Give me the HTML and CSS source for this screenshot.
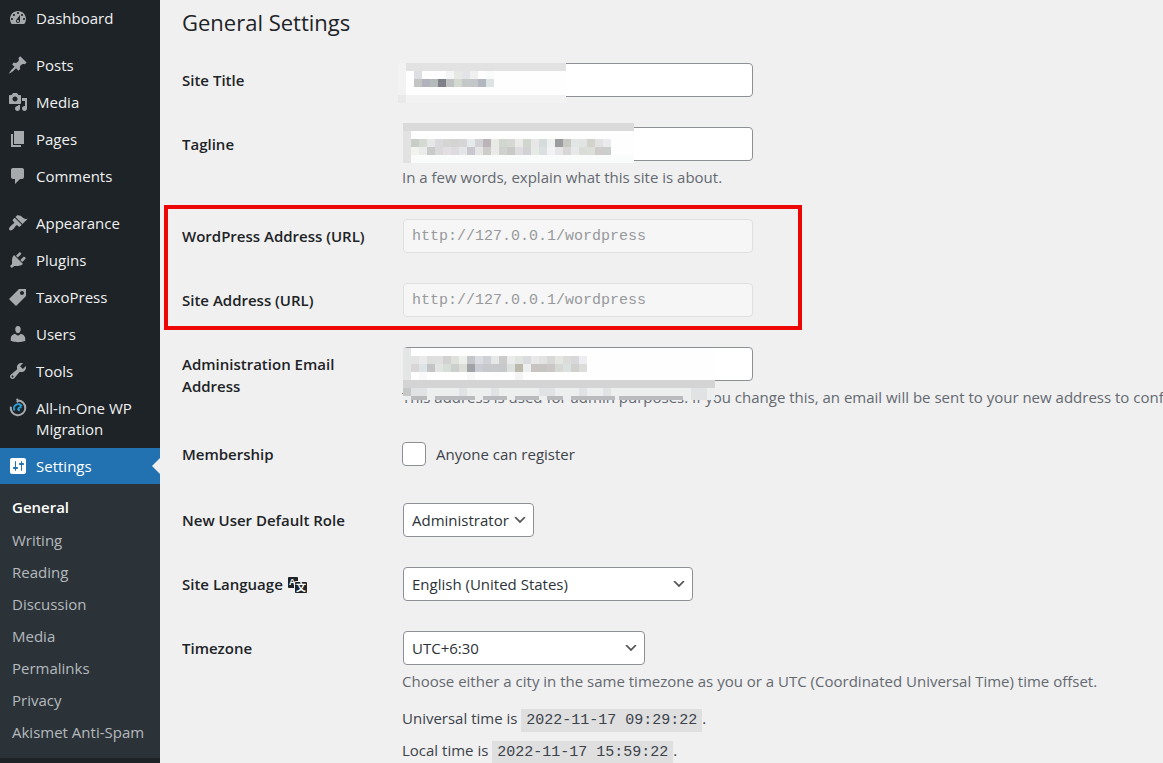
FILE: index.html
```
<!DOCTYPE html>
<html lang="en">
<head>
  <meta charset="UTF-8" />
  <meta name="viewport" content="width=device-width, initial-scale=1.0"/>
  <title>General Settings</title>
  <link rel="stylesheet" href="styles.css">
</head>
<body>
  <div class="admin">
    <nav class="sidebar">
      <ul class="menu">
        <li><a href="#"><svg class="icon" viewBox="0 0 20 20"><path fill-rule="evenodd" d="M3.76 16h12.48c1.1-1.37 1.76-3.11 1.76-5 0-4.42-3.58-8-8-8s-8 3.58-8 8c0 1.89.66 3.63 1.76 5zM10 4c.55 0 1 .45 1 1s-.45 1-1 1-1-.45-1-1 .45-1 1-1zM6 6c.55 0 1 .45 1 1s-.45 1-1 1-1-.45-1-1 .45-1 1-1zm8 0c.55 0 1 .45 1 1s-.45 1-1 1-1-.45-1-1 .45-1 1-1zm-5.37 5.55L12 7v6c0 1.1-.9 2-2 2s-2-.9-2-2c0-.57.24-1.08.63-1.45zM4 10c.55 0 1 .45 1 1s-.45 1-1 1-1-.45-1-1 .45-1 1-1zm12 0c.55 0 1 .45 1 1s-.45 1-1 1-1-.45-1-1 .45-1 1-1zm-5 3c0-.55-.45-1-1-1s-1 .45-1 1 .45 1 1 1 1-.45 1-1z"/></svg>Dashboard</a></li>
        <li class="separator"></li>
        <li><a href="#"><svg class="icon" viewBox="0 0 20 20"><path d="M10.44 3.02l1.82-1.82 6.36 6.35-1.83 1.82c-1.05-.68-2.48-.57-3.41.36l-.75.75c-.92.93-1.04 2.35-.35 3.41l-1.83 1.82-2.41-2.41-2.8 2.79c-.42.42-3.38 2.71-3.8 2.29s1.86-3.39 2.28-3.81l2.79-2.79L4.1 9.36l1.83-1.82c1.05.69 2.48.57 3.4-.36l.75-.75c.93-.92 1.05-2.35.36-3.41z"/></svg>Posts</a></li>
        <li><a href="#"><svg class="icon" viewBox="0 0 20 20"><path fill-rule="evenodd" d="M13 11V4c0-.55-.45-1-1-1h-1.67L9 1H5L3.67 3H2c-.55 0-1 .45-1 1v7c0 .55.45 1 1 1h10c.55 0 1-.45 1-1zM7 4.5c1.38 0 2.5 1.12 2.5 2.5S8.38 9.5 7 9.5 4.5 8.38 4.5 7 5.62 4.5 7 4.5zM14 6h5v10.5c0 1.38-1.12 2.5-2.5 2.5S14 17.88 14 16.5s1.12-2.5 2.5-2.5c.17 0 .34.02.5.05V9h-3V6zm-4 8.05V13h2v3.5c0 1.38-1.12 2.5-2.5 2.5S7 17.88 7 16.5 8.12 14 9.5 14c.17 0 .34.02.5.05z"/></svg>Media</a></li>
        <li><a href="#"><svg class="icon" viewBox="0 0 20 20"><path d="M6 15V2h10v13H6zm-1 1h8v2H3V5h2v11z"/></svg>Pages</a></li>
        <li><a href="#"><svg class="icon" viewBox="0 0 20 20"><path d="M5 2h9c1.1 0 2 .9 2 2v7c0 1.1-.9 2-2 2h-2l-5 5v-5H5c-1.1 0-2-.9-2-2V4c0-1.1.9-2 2-2z"/></svg>Comments</a></li>
        <li class="separator"></li>
        <li><a href="#"><svg class="icon" viewBox="0 0 20 20"><path d="M14.48 11.06L7.41 3.99l1.5-1.5c.5-.56 2.3-.47 3.51.32 1.21.8 1.43 1.28 2.91 2.1 1.18.64 2.45 1.26 4.45.85zm-.71.71L6.7 4.7 4.93 6.47c-.39.39-.39 1.02 0 1.41l1.06 1.06c.39.39.39 1.03 0 1.42-.6.6-1.43 1.11-2.21 1.69-.35.26-.7.53-1.01.84C1.43 14.23.4 16.08 1.4 17.07c.99 1 2.84-.03 4.18-1.36.31-.31.58-.66.85-1.02.57-.78 1.08-1.61 1.69-2.21.39-.39 1.02-.39 1.41 0l1.06 1.06c.39.39 1.02.39 1.41 0z"/></svg>Appearance</a></li>
        <li><a href="#"><svg class="icon" viewBox="0 0 20 20"><path d="M13.11 4.36L9.87 7.6 8 5.73l3.24-3.24c.35-.34 1.05-.2 1.56.32.52.51.66 1.21.31 1.55zm-8 1.77l.91-1.12 9.01 9.01-1.19.84c-.71.71-2.63 1.16-3.82 1.16H6.14L4.9 17.26c-.59.59-1.54.59-2.12 0-.59-.58-.59-1.53 0-2.12l1.24-1.24v-3.88c0-1.13.4-3.19 1.09-3.89zm7.26 3.97l3.24-3.24c.34-.35 1.04-.21 1.55.31.52.51.66 1.21.31 1.55l-3.24 3.25z"/></svg>Plugins</a></li>
        <li><a href="#"><svg class="icon" viewBox="0 0 20 20"><path fill-rule="evenodd" d="M11 2h7v7L8 19l-7-7zm3 6c1.1 0 2-.9 2-2s-.9-2-2-2-2 .9-2 2 .9 2 2 2z"/></svg>TaxoPress</a></li>
        <li><a href="#"><svg class="icon" viewBox="0 0 20 20"><path d="M10 9.25c-2.27 0-2.73-3.44-2.73-3.44C7 4.02 7.82 2 9.97 2c2.16 0 2.98 2.02 2.71 3.81 0 0-.41 3.44-2.68 3.44zm0 2.57L12.72 10c2.39 0 4.52 2.33 4.52 4.53v2.49s-3.65 1.13-7.24 1.13c-3.65 0-7.24-1.13-7.24-1.13v-2.49c0-2.25 1.94-4.48 4.47-4.48z"/></svg>Users</a></li>
        <li><a href="#"><svg class="icon" viewBox="0 0 20 20"><path fill-rule="evenodd" d="M16.68 9.77c-1.34 1.34-3.3 1.67-4.95.99l-5.41 6.52c-.99.99-2.59.99-3.58 0s-.99-2.59 0-3.57l6.52-5.42c-.68-1.65-.35-3.61.99-4.95 1.28-1.28 3.12-1.62 4.72-1.06l-2.89 2.89 2.82 2.82 2.86-2.87c.53 1.58.18 3.39-1.08 4.65zM3.81 16.21c.4.39 1.04.39 1.43 0 .4-.4.4-1.04 0-1.43-.39-.4-1.03-.4-1.43 0-.39.39-.39 1.03 0 1.43z"/></svg>Tools</a></li>
        <li><a href="#"><svg class="icon migrate" viewBox="0 0 20 20"><path class="ring" d="M9.5 2.6A7.3 7.3 0 1 1 2.8 8.6M8.6 1l1.6 1.6-1.2 1.8"/><path class="swirl" d="M6.6 12.4A4 4 0 1 1 13.6 8.2M13.6 9.6c-1.8-.9-3.6.1-3.4 1.8l1.6 1.2"/></svg>All-in-One WP Migration</a></li>
        <li class="current"><a href="#"><svg class="icon" viewBox="0 0 20 20"><path fill-rule="evenodd" d="M18 16V4c0-1.1-.9-2-2-2H4c-1.1 0-2 .9-2 2v12c0 1.1.9 2 2 2h12c1.1 0 2-.9 2-2zM8 11h1c.55 0 1 .45 1 1s-.45 1-1 1H8v1.5c0 .28-.22.5-.5.5s-.5-.22-.5-.5V13H6c-.55 0-1-.45-1-1s.45-1 1-1h1V5.5c0-.28.22-.5.5-.5s.5.22.5.5V11zm5-2h-1c-.55 0-1-.45-1-1s.45-1 1-1h1V5.5c0-.28.22-.5.5-.5s.5.22.5.5V7h1c.55 0 1 .45 1 1s-.45 1-1 1h-1v5.5c0 .28-.22.5-.5.5s-.5-.22-.5-.5V9z"/></svg>Settings</a></li>
      </ul>
      <ul class="submenu">
        <li><a href="#" class="active">General</a></li>
        <li><a href="#">Writing</a></li>
        <li><a href="#">Reading</a></li>
        <li><a href="#">Discussion</a></li>
        <li><a href="#">Media</a></li>
        <li><a href="#">Permalinks</a></li>
        <li><a href="#">Privacy</a></li>
        <li><a href="#">Akismet Anti-Spam</a></li>
      </ul>
    </nav>

    <main class="content">
      <h1>General Settings</h1>
      <form>
        <div class="row">
          <label for="blogname">Site Title</label>
          <div class="field">
            <input type="text" id="blogname" class="text-input">
            <svg class="mosaic mosaic-title" width="168" height="40" aria-hidden="true">
              <path fill="#fefefe" d="M0 0h168v40H0z"/>
              <path fill="#e1e2e1" d="M8 0h160v8H8z"/>
              <path fill="#f2f2f2" d="M0 0h8v40H0zM8 32h160v8H8z"/>
              <path fill="#e9e9e9" d="M0 32h8v8H0z"/>
              <g>
                <rect x="16" y="8" fill="#dedfe3"/><rect x="48" y="8" fill="#f4f6f6"/><rect x="56" y="8" fill="#e6e8e4"/><rect x="64" y="8" fill="#e3e4e8"/><rect x="72" y="8" fill="#f0f0f0"/><rect x="88" y="8" fill="#f9fbfb"/>
                <rect x="16" y="16" fill="#c3c5c4"/><rect x="24" y="16" fill="#b2b2bd"/><rect x="32" y="16" fill="#b5baba"/><rect x="40" y="16" fill="#808188"/><rect x="48" y="16" fill="#bfc1c3"/><rect x="56" y="16" fill="#d3d9d0"/><rect x="64" y="16" fill="#c6c8c7"/><rect x="72" y="16" fill="#c3c7c8"/><rect x="80" y="16" fill="#b1b6c0"/><rect x="88" y="16" fill="#dde2e2"/>
              </g>
            </svg>
          </div>
        </div>

        <div class="row">
          <label for="blogdescription">Tagline</label>
          <div class="field">
            <input type="text" id="blogdescription" class="text-input">
            <svg class="mosaic mosaic-tagline" width="231" height="40" aria-hidden="true">
              <path fill="#fefefe" d="M0 0h231v40H0z"/>
              <path fill="#dadada" d="M0 0h231v8H0z"/>
              <path fill="#e2e2e2" d="M0 8h8v32H0z"/>
              <path fill="#fafbfb" d="M8 32h223v8H8z"/>
              <g>
                <rect x="8" y="16" fill="#c8cdc8"/><rect x="16" y="16" fill="#d4d9d3"/><rect x="24" y="16" fill="#e6e7e7"/><rect x="32" y="16" fill="#dad9db"/><rect x="40" y="16" fill="#d5d5d4"/><rect x="48" y="16" fill="#d3d3d2"/><rect x="56" y="16" fill="#d6d6d6"/><rect x="64" y="16" fill="#e6eaea"/><rect x="72" y="16" fill="#d2d2d4"/><rect x="80" y="16" fill="#bab4b8"/><rect x="88" y="16" fill="#e8eae6"/><rect x="96" y="16" fill="#d1d6cf"/><rect x="104" y="16" fill="#d6d8d6"/><rect x="112" y="16" fill="#eaebe9"/><rect x="120" y="16" fill="#d1d6cd"/><rect x="128" y="16" fill="#e6e7e6"/><rect x="136" y="16" fill="#d6dbdb"/><rect x="144" y="16" fill="#edf0ef"/><rect x="152" y="16" fill="#9b9c9e"/><rect x="160" y="16" fill="#c9c9c4"/><rect x="168" y="16" fill="#e2e6e5"/><rect x="176" y="16" fill="#e2e4e4"/><rect x="184" y="16" fill="#d2d4cc"/><rect x="192" y="16" fill="#e2e2e2"/><rect x="200" y="16" fill="#ebebef"/>
                <rect x="8" y="24" fill="#f2f3ec"/><rect x="16" y="24" fill="#eaebeb"/><rect x="24" y="24" fill="#c9cbcb"/><rect x="32" y="24" fill="#d9d9da"/><rect x="40" y="24" fill="#e2dee1"/><rect x="48" y="24" fill="#dedbde"/><rect x="56" y="24" fill="#e3e6e6"/><rect x="64" y="24" fill="#cac8cf"/><rect x="72" y="24" fill="#e5e5e6"/><rect x="80" y="24" fill="#cecccb"/><rect x="88" y="24" fill="#eaebe8"/><rect x="96" y="24" fill="#cfd1ce"/><rect x="104" y="24" fill="#c8cac8"/><rect x="112" y="24" fill="#dddcdf"/><rect x="120" y="24" fill="#d2d2d5"/><rect x="128" y="24" fill="#e6eae7"/><rect x="136" y="24" fill="#dae0df"/><rect x="144" y="24" fill="#f2f2f4"/><rect x="152" y="24" fill="#e6e6e6"/><rect x="160" y="24" fill="#d8d6d7"/><rect x="168" y="24" fill="#e7e8ea"/><rect x="176" y="24" fill="#dadcd7"/><rect x="184" y="24" fill="#dcdfd7"/><rect x="192" y="24" fill="#cfcdcb"/><rect x="200" y="24" fill="#cacecd"/>
              </g>
            </svg>
            <p class="description">In a few words, explain what this site is about.</p>
          </div>
        </div>

        <div class="highlight">
          <div class="row">
            <label for="siteurl">WordPress Address (URL)</label>
            <div class="field">
              <input type="url" id="siteurl" class="text-input code-input" value="http://127.0.0.1/wordpress" disabled>
            </div>
          </div>
          <div class="row">
            <label for="home">Site Address (URL)</label>
            <div class="field">
              <input type="url" id="home" class="text-input code-input" value="http://127.0.0.1/wordpress" disabled>
            </div>
          </div>
        </div>

        <div class="row">
          <label for="admin_email">Administration Email Address</label>
          <div class="field">
            <input type="email" id="admin_email" class="text-input">
            <p class="description">This address is used for admin purposes. If you change this, an email will be sent to your new address to confirm it.</p>
            <svg class="mosaic mosaic-email" width="312" height="52" aria-hidden="true">
              <path fill="#fefefe" d="M0 0h312v32H0z"/>
              <path fill="#e4e5e5" d="M0 0h8v32H0z"/>
              <path fill="#d4d4d4" d="M0 32h312v8H0z"/>
              <path fill="#edeeee" d="M0 40h312v12H0z"/>
              <path fill="#b9bbbc" d="M8 48h16v4H8zM32 48h40v4H32zM80 48h24v4H80zM112 48h24v4h-24zM144 48h16v4h-16zM168 48h44v4h-44zM216 48h64v4h-64z"/>
              <path fill="#e1e2e4" d="M8 40h16v8H8zM56 40h8v8h-8zM88 40h8v8h-8zM136 40h16v8h-16zM176 40h8v8h-8zM200 40h8v8h-8zM288 40h16v12h-16z"/>
              <g>
                <rect x="8" y="8" fill="#e2e3e3"/><rect x="16" y="8" fill="#eaeaea"/><rect x="24" y="8" fill="#dcdfdc"/><rect x="32" y="8" fill="#dedfde"/><rect x="40" y="8" fill="#d2d2d2"/><rect x="48" y="8" fill="#dfe1dd"/><rect x="56" y="8" fill="#ecf0ea"/><rect x="64" y="8" fill="#c5c6c9"/><rect x="72" y="8" fill="#dcdde2"/><rect x="80" y="8" fill="#d0d1d6"/><rect x="88" y="8" fill="#e6e7e7"/><rect x="96" y="8" fill="#cbcbca"/><rect x="104" y="8" fill="#eaecec"/><rect x="112" y="8" fill="#e2e4e2"/><rect x="120" y="8" fill="#dadbdf"/><rect x="128" y="8" fill="#e8e8e8"/><rect x="136" y="8" fill="#e2e2e2"/><rect x="144" y="8" fill="#d8d8d7"/><rect x="152" y="8" fill="#e4e6e2"/><rect x="160" y="8" fill="#dcdcdb"/><rect x="168" y="8" fill="#d8d8da"/><rect x="176" y="8" fill="#ecedf0"/>
                <rect x="8" y="16" fill="#dbd6d6"/><rect x="16" y="16" fill="#dde4e6"/><rect x="24" y="16" fill="#c2c4c5"/><rect x="32" y="16" fill="#e2e4e1"/><rect x="40" y="16" fill="#d7ded8"/><rect x="48" y="16" fill="#cbd0cc"/><rect x="56" y="16" fill="#dbdfd7"/><rect x="64" y="16" fill="#a2a3a9"/><rect x="72" y="16" fill="#cacbd3"/><rect x="80" y="16" fill="#c6c8cc"/><rect x="88" y="16" fill="#c8c9ca"/><rect x="96" y="16" fill="#c6c8ca"/><rect x="104" y="16" fill="#dde1de"/><rect x="112" y="16" fill="#bbbaad"/><rect x="120" y="16" fill="#eceeef"/><rect x="128" y="16" fill="#c7c4c2"/><rect x="136" y="16" fill="#c7c5c1"/><rect x="144" y="16" fill="#cac7c6"/><rect x="152" y="16" fill="#d6d9d3"/><rect x="160" y="16" fill="#dae1df"/><rect x="168" y="16" fill="#d0d1ce"/><rect x="176" y="16" fill="#dcddda"/>
                <rect x="16" y="24" fill="#f9f9fc"/><rect x="64" y="24" fill="#f8f8f8"/><rect x="112" y="24" fill="#f4f4f5"/><rect x="0" y="40" fill="#c5c8c7"/>
              </g>
            </svg>
          </div>
        </div>

        <div class="row check-row">
          <span class="row-title">Membership</span>
          <div class="field check-field">
            <input type="checkbox" id="users_can_register">
            <label for="users_can_register">Anyone can register</label>
          </div>
        </div>

        <div class="row">
          <label for="default_role">New User Default Role</label>
          <div class="field">
            <select id="default_role" class="role-select"><option>Administrator</option></select>
          </div>
        </div>

        <div class="row">
          <label for="language">Site Language
            <svg class="translate" viewBox="0 0 20 18" aria-hidden="true">
              <path d="M2 1h8a1 1 0 0 1 1 1v3H9a2 2 0 0 0-2 2v5H2a1 1 0 0 1-1-1V2a1 1 0 0 1 1-1z"/>
              <rect class="page" x="8" y="6" rx="1"/>
              <text x="2" y="9" font-size="9">A</text>
              <text x="9" y="15" font-size="10" class="cjk">文</text>
            </svg>
          </label>
          <div class="field">
            <select id="language" class="language-select"><option>English (United States)</option></select>
          </div>
        </div>

        <div class="row">
          <label for="timezone">Timezone</label>
          <div class="field">
            <select id="timezone" class="timezone-select"><option>UTC+6:30</option></select>
            <p class="description">Choose either a city in the same timezone as you or a UTC (Coordinated Universal Time) time offset.</p>
            <div class="times">
              <p>Universal time is <code>2022-11-17 09:29:22</code>.</p>
              <p>Local time is <code>2022-11-17 15:59:22</code>.</p>
            </div>
          </div>
        </div>
      </form>
    </main>
  </div>
</body>
</html>
```
FILE: styles.css
```
* {
  box-sizing: border-box;
}
html, body {
  margin: 0;
  padding: 0;
  height: 100%;
  overflow: hidden;
}
body {
  background: #f0f0f0;
  color: #3c434a;
  font-family: "Open Sans", "Noto Sans", sans-serif;
  font-size: 15px;
  line-height: 22px;
}
.admin {
  display: flex;
  min-height: 100%;
}

/* sidebar */
.sidebar {
  width: 160px;
  flex-shrink: 0;
  background: #1d2327;
}
.menu, .submenu {
  list-style: none;
  margin: 0;
  padding: 0;
}
.menu a {
  display: flex;
  gap: 8px;
  padding: 8px;
  color: #f0f0f1;
  line-height: 21px;
  text-decoration: none;
}
.menu .separator {
  height: 10px;
}
.icon {
  width: 20px;
  height: 20px;
  flex-shrink: 0;
  fill: #a7aaad;
}
.migrate path {
  fill: none;
  stroke-width: 2;
}
.migrate .ring {
  stroke: #a7aaad;
}
.migrate .swirl {
  stroke: #2c9fd6;
}
.menu .current {
  position: relative;
  background: #2271b1;
}
.menu .current a {
  padding-bottom: 7px;
  color: #fff;
}
.current .icon {
  fill: #fff;
}
.current::after {
  content: "";
  position: absolute;
  top: 10px;
  right: 0;
  border: 8px solid transparent;
  border-left: 0;
  border-right-color: #f0f0f0;
}
.submenu {
  background: #2c3338;
  padding: 7px 0 10px;
}
.submenu a {
  display: block;
  padding: 5px 12px;
  color: #b4b9be;
  text-decoration: none;
  white-space: nowrap;
}
.submenu .active {
  padding-bottom: 6px;
  color: #fff;
  font-weight: 600;
}

/* settings form */
.content {
  flex: 1;
  min-width: 0;
  padding: 7px 0 0 22px;
}
h1 {
  margin: 0 0 11px;
  color: #1d2327;
  font-size: 22px;
  font-weight: 400;
  line-height: 30px;
}
.row {
  display: grid;
  grid-template-columns: 220px minmax(0, 1fr);
  padding: 15px 0;
}
.check-row {
  padding: 13px 0 17px;
}
.row > label, .row-title {
  padding: 6px 36px 6px 0;
  color: #1d2327;
  font-weight: 600;
}
.row > label[for="language"] {
  padding-right: 0;
}
.field {
  position: relative;
  min-height: 34px;
}
.text-input, select {
  display: block;
  height: 34px;
  margin: 0 0 0 1px;
  padding: 0 8px;
  border: 1px solid #8c8f94;
  border-radius: 4px;
  background: #fff;
  color: #2c3338;
  font: inherit;
}
.text-input {
  width: 350px;
  max-width: 100%;
}
.code-input {
  font-family: "Liberation Mono", monospace;
}
.text-input:disabled {
  border-color: #dfdfe0;
  background: #f6f6f6;
  color: #97999c;
}
select {
  appearance: none;
  background: #fff url("data:image/svg+xml,%3Csvg xmlns='http://www.w3.org/2000/svg' viewBox='0 0 20 20'%3E%3Cpath d='M5 6l5 5 5-5 2 1-7 7-7-7 2-1z' fill='%23555'/%3E%3C/svg%3E") no-repeat right 5px center / 16px;
}
.role-select {
  width: 131px;
}
.language-select {
  width: 290px;
}
.timezone-select {
  width: 242px;
}
.description {
  margin: 5px 0 1px;
  color: #646970;
  white-space: nowrap;
}
.check-field {
  display: flex;
  align-items: center;
  gap: 10px;
}
.check-field input {
  appearance: none;
  width: 24px;
  height: 24px;
  margin: 0;
  border: 1px solid #8c8f94;
  border-radius: 4px;
  background: #fff;
}
.times {
  display: grid;
  gap: 7px;
  margin-top: 15px;
}
.times p {
  margin: 0;
}
code {
  padding: 3px 5px;
  background: #dfdfe0;
  font-family: "Liberation Mono", monospace;
}
.translate {
  width: 20px;
  height: 18px;
  vertical-align: -4px;
  fill: #1d2327;
}
.translate .page {
  width: 12px;
  height: 11px;
}
.translate text {
  fill: #fff;
  font-family: "Liberation Sans", sans-serif;
  font-weight: bold;
}
.translate .cjk {
  font-family: "Noto Sans CJK SC", sans-serif;
}

/* red frame around the two address rows */
.highlight {
  position: relative;
}
.highlight::after {
  content: "";
  position: absolute;
  top: 1px;
  bottom: 2px;
  left: -18px;
  width: 630px;
  border: 4px solid #ec0606;
  pointer-events: none;
}

/* pixelated patches over private values */
.mosaic {
  position: absolute;
  pointer-events: none;
}
.mosaic rect {
  width: 8px;
  height: 8px;
}
.mosaic-title {
  top: 0;
  left: -4px;
}
.mosaic-tagline {
  top: -4px;
  left: 1px;
}
.mosaic-email {
  top: 1px;
  left: 1px;
}
```
